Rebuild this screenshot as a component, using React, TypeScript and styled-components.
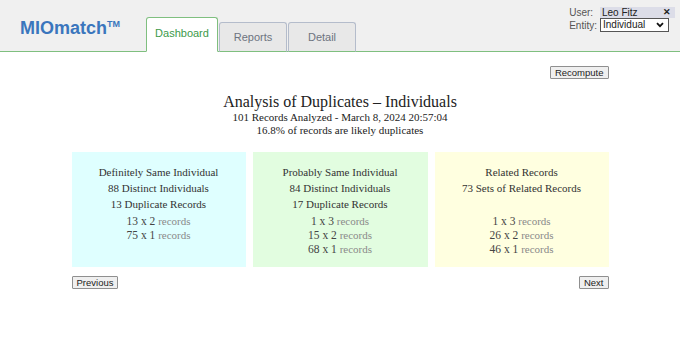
import React, { FC } from "react";
import styled, { createGlobalStyle } from "styled-components";

const GlobalStyle = createGlobalStyle`
  html, body {
    margin: 0;
    padding: 0;
    background: #ffffff;
  }
  body {
    font-family: "Liberation Serif", "Times New Roman", serif;
  }
`;

const Header = styled.div`
  height: 51px;
  background: #f0f0f0;
  border-bottom: 1px solid #7fbf7f;
  display: flex;
  align-items: flex-end;
  position: relative;
`;

const Logo = styled.div`
  font-family: "Liberation Sans", Arial, sans-serif;
  font-weight: bold;
  font-size: 18px;
  color: #3a76bd;
  align-self: flex-start;
  margin: 18px 0 0 20px;
  width: 126px;
  sup {
    font-size: 9px;
    vertical-align: 7px;
  }
`;

const Tabs = styled.div`
  display: flex;
  align-items: flex-end;
  gap: 1px;
  margin-bottom: -1px;
`;

const Tab = styled.div<{ active?: boolean }>`
  font-family: "Liberation Sans", Arial, sans-serif;
  font-size: 11px;
  height: ${(p) => (p.active ? "35px" : "30px")};
  width: ${(p) => (p.active ? "72px" : "68px")};
  box-sizing: border-box;
  display: flex;
  align-items: center;
  justify-content: center;
  padding-bottom: ${(p) => (p.active ? "3px" : "0")};
  border: 1px solid ${(p) => (p.active ? "#7fbf7f" : "#b4bccb")};
  border-bottom: ${(p) => (p.active ? "1px solid #ffffff" : "1px solid #7fbf7f")};
  border-radius: 3px 3px 0 0;
  background: ${(p) => (p.active ? "#ffffff" : "#e8e8e8")};
  color: ${(p) => (p.active ? "#3c9a4a" : "#6d7480")};
`;

const UserPanel = styled.div`
  position: absolute;
  top: 7px;
  right: 11px;
  display: grid;
  grid-template-columns: auto 69px;
  column-gap: 3px;
  row-gap: 0;
  font-family: "Liberation Sans", Arial, sans-serif;
  font-size: 10px;
  color: #555;
  align-items: center;
`;

const Label = styled.div`
  text-align: left;
`;

const UserBox = styled.div`
  background: #dcdde8;
  color: #222;
  height: 11px;
  line-height: 11px;
  padding: 0 4px 0 2px;
  display: flex;
  justify-content: space-between;
  width: 75px;
  box-sizing: border-box;
  span:last-child {
    font-weight: bold;
    font-size: 9px;
  }
`;

const Select = styled.div`
  border: 1px solid #555;
  background: #fff;
  color: #222;
  height: 12px;
  line-height: 12px;
  padding: 0 4px 0 2px;
  display: flex;
  justify-content: space-between;
  align-items: center;
  box-sizing: content-box;
  width: 61px;
`;

const Main = styled.div`
  width: 537px;
  margin: 0 auto;
  padding-top: 14px;
`;

const TopRow = styled.div`
  display: flex;
  justify-content: flex-end;
`;

const Btn = styled.button`
  font-family: "Liberation Sans", Arial, sans-serif;
  font-size: 9.5px;
  color: #222;
  background: #efefef;
  border: 1px solid #8f8f8f;
  border-radius: 1px;
  padding: 0 4px;
  height: 13px;
  line-height: 11px;
`;

const Title = styled.div`
  text-align: center;
  color: #222;
  margin-top: 14px;
  h1 {
    font-size: 16px;
    font-weight: normal;
    margin: 0;
    line-height: 18px;
  }
  div {
    font-size: 11px;
    line-height: 13px;
  }
`;

const Cards = styled.div`
  display: grid;
  grid-template-columns: 174px 175px 174px;
  column-gap: 7px;
  margin-top: 15px;
`;

const Card = styled.div<{ bg: string }>`
  background: ${(p) => p.bg};
  height: 115px;
  box-sizing: border-box;
  padding-top: 12px;
  text-align: center;
  font-size: 11px;
  color: #333;
`;

const Line = styled.div`
  line-height: 16px;
`;

const Spacer = styled.div`
  height: 16px;
`;

const Breakdown = styled.div`
  margin-top: 2px;
  line-height: 14px;
  color: #444;
  font-size: 11.5px;
  span {
    color: #8a8a8a;
    font-size: 11px;
  }
`;

const BottomRow = styled.div`
  display: flex;
  justify-content: space-between;
  margin-top: 9px;
`;

type CardData = {
  bg: string;
  lines: string[];
  gap?: boolean;
  rows: [number, number][];
};

const cards: CardData[] = [
  {
    bg: "#dfffff",
    lines: ["Definitely Same Individual", "88 Distinct Individuals", "13 Duplicate Records"],
    rows: [
      [13, 2],
      [75, 1],
    ],
  },
  {
    bg: "#e2fde0",
    lines: ["Probably Same Individual", "84 Distinct Individuals", "17 Duplicate Records"],
    rows: [
      [1, 3],
      [15, 2],
      [68, 1],
    ],
  },
  {
    bg: "#ffffe0",
    lines: ["Related Records", "73 Sets of Related Records"],
    gap: true,
    rows: [
      [1, 3],
      [26, 2],
      [46, 1],
    ],
  },
];

const App: FC = () => {
  return (
    <>
      <GlobalStyle />
      <Header>
        <Logo>
          MIOmatch<sup>TM</sup>
        </Logo>
        <Tabs>
          <Tab active>Dashboard</Tab>
          <Tab>Reports</Tab>
          <Tab>Detail</Tab>
        </Tabs>
        <UserPanel>
          <Label>User:</Label>
          <UserBox>
            <span>Leo Fitz</span>
            <span>✕</span>
          </UserBox>
          <Label>Entity:</Label>
          <Select>
            <span>Individual</span>
            <svg width="8" height="6" viewBox="0 0 8 6">
              <path d="M1 1.2 L4 4.2 L7 1.2" stroke="#111" strokeWidth="1.8" fill="none" />
            </svg>
          </Select>
        </UserPanel>
      </Header>
      <Main>
        <TopRow>
          <Btn>Recompute</Btn>
        </TopRow>
        <Title>
          <h1>Analysis of Duplicates – Individuals</h1>
          <div>101 Records Analyzed - March 8, 2024 20:57:04</div>
          <div>16.8% of records are likely duplicates</div>
        </Title>
        <Cards>
          {cards.map((c, i) => (
            <Card key={i} bg={c.bg}>
              {c.lines.map((l) => (
                <Line key={l}>{l}</Line>
              ))}
              {c.gap && <Spacer />}
              <Breakdown>
                {c.rows.map(([n, k]) => (
                  <div key={`${n}-${k}`}>
                    {n} x {k} <span>records</span>
                  </div>
                ))}
              </Breakdown>
            </Card>
          ))}
        </Cards>
        <BottomRow>
          <Btn>Previous</Btn>
          <Btn>Next</Btn>
        </BottomRow>
      </Main>
    </>
  );
};

export default App;
